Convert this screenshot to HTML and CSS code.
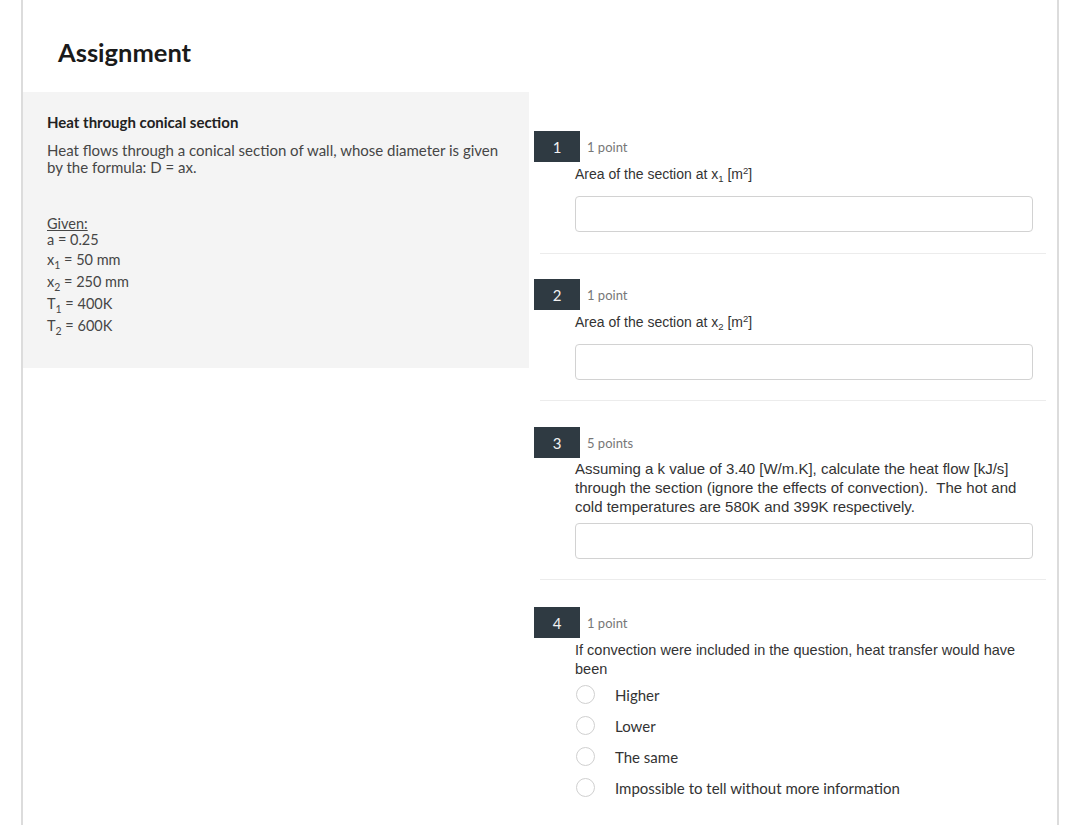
FILE: index.html
```html
<!DOCTYPE html>
<html lang="en">
<head>
<meta charset="utf-8">
<title>Assignment</title>
<link rel="stylesheet" href="styles.css">
</head>
<body>
<div class="page">
  <div class="header">
    <h1 class="title">Assignment</h1>
  </div>
  <div class="content">
    <div class="panel">
      <p class="panel-title">Heat through conical section</p>
      <p class="panel-text">Heat flows through a conical section of wall, whose diameter is given by the formula: D = ax.</p>
      <div class="given">
        <div class="line"><span class="u">Given:</span></div>
        <div class="line">a = 0.25</div>
        <div class="line tall">x<sub class="sb">1</sub> = 50 mm</div>
        <div class="line tall">x<sub class="sb">2</sub> = 250 mm</div>
        <div class="line tall">T<sub class="sb">1</sub> = 400K</div>
        <div class="line tall">T<sub class="sb">2</sub> = 600K</div>
      </div>
    </div>
    <div class="questions">
      <div class="question">
        <div class="q-head"><span class="badge">1</span><span class="points">1 point</span></div>
        <div class="q-body">
          <div class="q-text">Area of the section at x<sub class="qs">1</sub> [m<sup class="qp">2</sup>]</div>
          <input class="answer" type="text">
        </div>
        <div class="q-sep"></div>
      </div>
      <div class="question">
        <div class="q-head"><span class="badge">2</span><span class="points">1 point</span></div>
        <div class="q-body">
          <div class="q-text">Area of the section at x<sub class="qs">2</sub> [m<sup class="qp">2</sup>]</div>
          <input class="answer" type="text">
        </div>
        <div class="q-sep q-sep-short"></div>
      </div>
      <div class="question q3">
        <div class="q-head"><span class="badge">3</span><span class="points">5 points</span></div>
        <div class="q-body">
          <div class="q-text q-text-lg">Assuming a k value of 3.40 [W/m.K], calculate the heat flow [kJ/s] through the section (ignore the effects of convection).&nbsp; The hot and cold temperatures are 580K and 399K respectively.</div>
          <input class="answer answer-lg" type="text">
        </div>
        <div class="q-sep q-sep-short"></div>
      </div>
      <div class="question q4">
        <div class="q-head"><span class="badge">4</span><span class="points">1 point</span></div>
        <div class="q-body">
          <div class="q-text q-text-mc">If convection were included in the question, heat transfer would have been</div>
          <div class="options">
            <label class="option"><span class="radio"></span><span class="opt-label">Higher</span></label>
            <label class="option"><span class="radio"></span><span class="opt-label">Lower</span></label>
            <label class="option"><span class="radio"></span><span class="opt-label">The same</span></label>
            <label class="option"><span class="radio"></span><span class="opt-label">Impossible to tell without more information</span></label>
          </div>
        </div>
      </div>
    </div>
  </div>
</div>
</body>
</html>
```

FILE: styles.css
```css
* {
  box-sizing: border-box;
}

html, body {
  margin: 0;
  background: #ffffff;
}

body {
  font-family: Lato, "Liberation Sans", Arial, sans-serif;
  color: #333333;
}

.page {
  margin-left: 21px;
  width: 1038px;
  min-height: 825px;
  border-left: 2px solid #dcdcdc;
  border-right: 2px solid #dcdcdc;
}

.header {
  height: 92px;
  padding: 37px 0 0 35px;
}

.title {
  margin: 0;
  font-size: 25.5px;
  line-height: 30px;
  font-weight: 700;
  color: #1a1a1a;
}

.content {
  display: flex;
  align-items: flex-start;
}

.panel {
  width: 506px;
  flex: 0 0 506px;
  background: #f4f4f4;
  padding: 21px 24px 32px 24px;
}

.panel-title {
  margin: 0;
  font-size: 15px;
  line-height: 18px;
  font-weight: 700;
  color: #222222;
}

.panel-text {
  margin: 11px 0 0 0;
  font-size: 15px;
  line-height: 17px;
  color: #464646;
}

.given {
  margin-top: 40px;
  font-size: 14.5px;
  color: #464646;
}

.given .line {
  line-height: 16px;
}

.given .line.tall {
  padding: 4px 0 2px 0;
}

.u {
  text-decoration: underline;
}

.sb {
  font-size: 10.5px;
  line-height: 0;
  vertical-align: -4px;
}

.questions {
  flex: 1;
  padding: 39px 11px 0 5px;
}

.question + .question {
  margin-top: 25px;
}

.question.q3 {
  margin-top: 26px;
}

.question.q4 {
  margin-top: 27px;
}

.q-head {
  display: flex;
  align-items: center;
}

.badge {
  width: 46px;
  height: 31px;
  background: #2f3a42;
  color: #f2f2f2;
  font-size: 15px;
  display: flex;
  align-items: center;
  justify-content: center;
}

.points {
  margin-left: 7px;
  font-size: 13px;
  color: #777777;
}

.q-body {
  margin-left: 41px;
}

.q-text {
  margin-top: 3px;
  font-family: "Liberation Sans", Arial, sans-serif;
  font-size: 14px;
  line-height: 18px;
  color: #333333;
}

.q-text-lg {
  margin-top: 1px;
  font-size: 15px;
  line-height: 19px;
}

.q-text-mc {
  max-width: 450px;
  font-size: 14.5px;
  line-height: 18.5px;
}

.qs {
  font-size: 9.5px;
  line-height: 0;
  vertical-align: -3px;
}

.qp {
  font-size: 9.5px;
  line-height: 0;
  vertical-align: 5px;
}

.answer {
  display: block;
  margin: 13px 0 0 0;
  width: 458px;
  height: 36px;
  padding: 0 10px;
  border: 1px solid #d2d2d2;
  border-radius: 4px;
  background: #ffffff;
  font-size: 14px;
  outline: none;
}

.answer-lg {
  margin-top: 7px;
}

.q-sep {
  margin: 21px 0 0 6px;
  height: 1px;
  background: #ececec;
}

.q-sep.q-sep-short {
  margin-top: 20px;
}

.options {
  margin-top: 1px;
  display: flex;
  flex-direction: column;
}

.option {
  height: 31px;
  display: flex;
  align-items: center;
  gap: 20px;
}

.radio {
  width: 19px;
  height: 19px;
  margin-left: 1px;
  border: 1px solid #d0d0d0;
  border-radius: 50%;
  background: #ffffff;
  flex: 0 0 19px;
}

.opt-label {
  font-size: 15px;
  color: #333333;
}
```
